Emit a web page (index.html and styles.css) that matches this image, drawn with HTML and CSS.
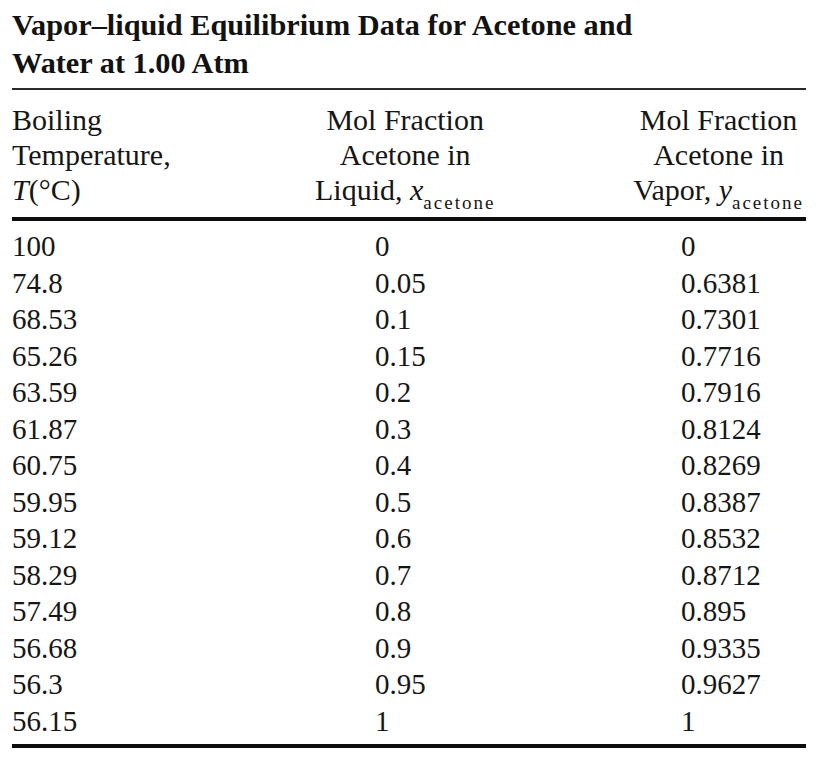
FILE: index.html
```html
<!DOCTYPE html>
<html lang="en">
<head>
<meta charset="utf-8">
<title>Vapor–liquid Equilibrium Data</title>
<link rel="stylesheet" href="styles.css">
</head>
<body>
<div class="page">
  <h1 class="title">Vapor–liquid Equilibrium Data for Acetone and<br>Water at 1.00 Atm</h1>
  <div class="rule-thin"></div>
  <div class="head">
    <div class="h1">Boiling<br>Temperature,<br><i>T</i>(°C)</div>
    <div class="h2">Mol Fraction<br>Acetone in<br>Liquid, <i>x</i><sub>acetone</sub></div>
    <div class="h3">Mol Fraction<br>Acetone in<br>Vapor, <i>y</i><sub>acetone</sub></div>
  </div>
  <div class="rule-thick"></div>
  <div class="data">
    <span>100</span><span>0</span><span>0</span>
    <span>74.8</span><span>0.05</span><span>0.6381</span>
    <span>68.53</span><span>0.1</span><span>0.7301</span>
    <span>65.26</span><span>0.15</span><span>0.7716</span>
    <span>63.59</span><span>0.2</span><span>0.7916</span>
    <span>61.87</span><span>0.3</span><span>0.8124</span>
    <span>60.75</span><span>0.4</span><span>0.8269</span>
    <span>59.95</span><span>0.5</span><span>0.8387</span>
    <span>59.12</span><span>0.6</span><span>0.8532</span>
    <span>58.29</span><span>0.7</span><span>0.8712</span>
    <span>57.49</span><span>0.8</span><span>0.895</span>
    <span>56.68</span><span>0.9</span><span>0.9335</span>
    <span>56.3</span><span>0.95</span><span>0.9627</span>
    <span>56.15</span><span>1</span><span>1</span>
  </div>
  <div class="rule-bottom"></div>
</div>
</body>
</html>
```

FILE: styles.css
```css
html, body {
  margin: 0;
  padding: 0;
  background: #ffffff;
}

body {
  font-family: "Liberation Serif", "Times New Roman", serif;
  color: #161616;
}

.page {
  padding: 6px 12px 0 12px;
}

.title {
  margin: 0;
  font-size: 30.3px;
  font-weight: bold;
  line-height: 38px;
  color: #121212;
}

.rule-thin {
  margin-top: 6px;
  height: 2px;
  background: #2a2a2a;
}

.head {
  margin-top: 12px;
  display: grid;
  grid-template-columns: 303px auto 1fr;
  font-size: 30px;
  line-height: 35px;
}

.h1 {
  text-align: left;
}

.h2 {
  text-align: center;
}

.h3 {
  justify-self: end;
  text-align: center;
  padding-right: 2px;
}

.head sub {
  font-size: 19px;
  letter-spacing: 2px;
  vertical-align: -9px;
  line-height: 0;
}

.rule-thick {
  margin-top: 10px;
  height: 4px;
  background: #0c0c0c;
}

.data {
  margin-top: 7px;
  display: grid;
  grid-template-columns: 363px 306px 1fr;
  font-size: 29px;
  line-height: 36.5px;
}

.rule-bottom {
  margin-top: 5px;
  height: 4px;
  background: #0c0c0c;
}
```
